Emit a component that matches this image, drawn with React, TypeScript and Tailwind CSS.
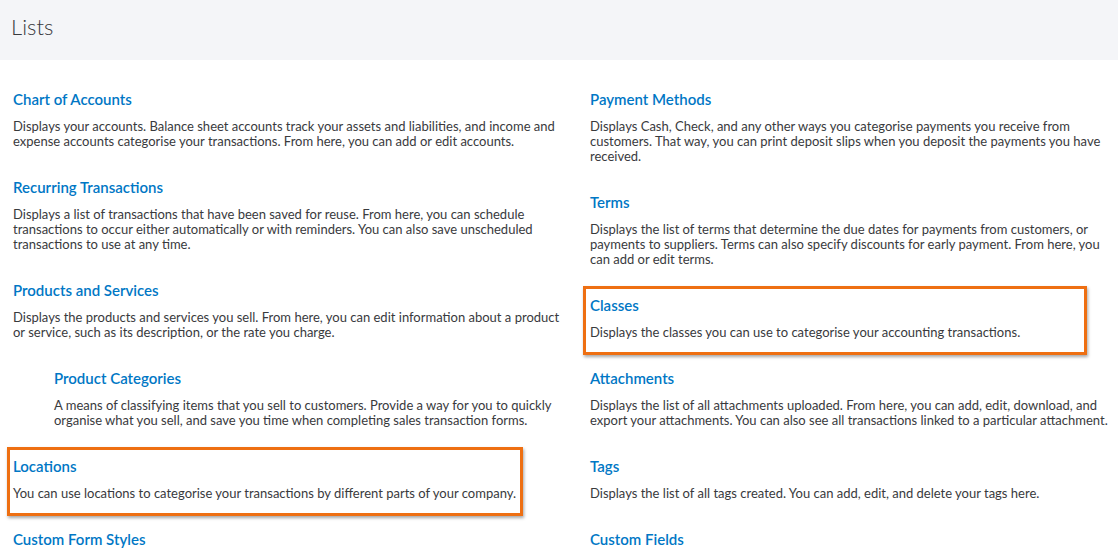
type Item = {
  title: string;
  desc: string;
  indent?: boolean;
  highlight?: boolean;
};

const left: Item[] = [
  {
    title: "Chart of Accounts",
    desc: "Displays your accounts. Balance sheet accounts track your assets and liabilities, and income and expense accounts categorise your transactions. From here, you can add or edit accounts.",
  },
  {
    title: "Recurring Transactions",
    desc: "Displays a list of transactions that have been saved for reuse. From here, you can schedule transactions to occur either automatically or with reminders. You can also save unscheduled transactions to use at any time.",
  },
  {
    title: "Products and Services",
    desc: "Displays the products and services you sell. From here, you can edit information about a product or service, such as its description, or the rate you charge.",
  },
  {
    title: "Product Categories",
    desc: "A means of classifying items that you sell to customers. Provide a way for you to quickly organise what you sell, and save you time when completing sales transaction forms.",
    indent: true,
  },
  {
    title: "Locations",
    desc: "You can use locations to categorise your transactions by different parts of your company.",
    highlight: true,
  },
  { title: "Custom Form Styles", desc: "" },
];

const right: Item[] = [
  {
    title: "Payment Methods",
    desc: "Displays Cash, Check, and any other ways you categorise payments you receive from customers. That way, you can print deposit slips when you deposit the payments you have received.",
  },
  {
    title: "Terms",
    desc: "Displays the list of terms that determine the due dates for payments from customers, or payments to suppliers. Terms can also specify discounts for early payment. From here, you can add or edit terms.",
  },
  {
    title: "Classes",
    desc: "Displays the classes you can use to categorise your accounting transactions.",
    highlight: true,
  },
  {
    title: "Attachments",
    desc: "Displays the list of all attachments uploaded. From here, you can add, edit, download, and export your attachments. You can also see all transactions linked to a particular attachment.",
  },
  {
    title: "Tags",
    desc: "Displays the list of all tags created. You can add, edit, and delete your tags here.",
  },
  { title: "Custom Fields", desc: "" },
];

function ListItem({ item, boxClass }: { item: Item; boxClass?: string }) {
  return (
    <div className={`relative pb-[28px] ${item.indent ? "pl-[41px]" : ""}`}>
      {item.highlight && (
        <div
          className={`absolute top-[-9px] bottom-[13px] border-[3px] border-[#ee6f12] shadow-[1px_2px_3px_rgba(0,0,0,0.35)] pointer-events-none ${boxClass}`}
        />
      )}
      <a className="block text-[15px] leading-[20px] font-semibold text-[#0077c5] cursor-pointer">
        {item.title}
      </a>
      {item.desc && (
        <p className="mt-[10px] text-[13px] leading-[15px] text-[#393a3d]">
          {item.desc}
        </p>
      )}
    </div>
  );
}

export default function App() {
  return (
    <div
      className="min-h-screen bg-white"
      style={{ fontFamily: "Lato, 'Open Sans', sans-serif" }}
    >
      <header className="h-[60px] bg-[#f4f5f8] flex items-center px-[11px]">
        <h1 className="text-[22px] font-light text-[#393a3d] -mt-[8px]">Lists</h1>
      </header>
      <main className="grid grid-cols-[556px_520px] gap-x-[21px] pl-[13px] pt-[29px]">
        <div>
          {left.map((it) => (
            <ListItem key={it.title} item={it} boxClass="left-[-6px] w-[516px]" />
          ))}
        </div>
        <div>
          {right.map((it) => (
            <ListItem key={it.title} item={it} boxClass="left-[-7px] w-[504px]" />
          ))}
        </div>
      </main>
    </div>
  );
}
